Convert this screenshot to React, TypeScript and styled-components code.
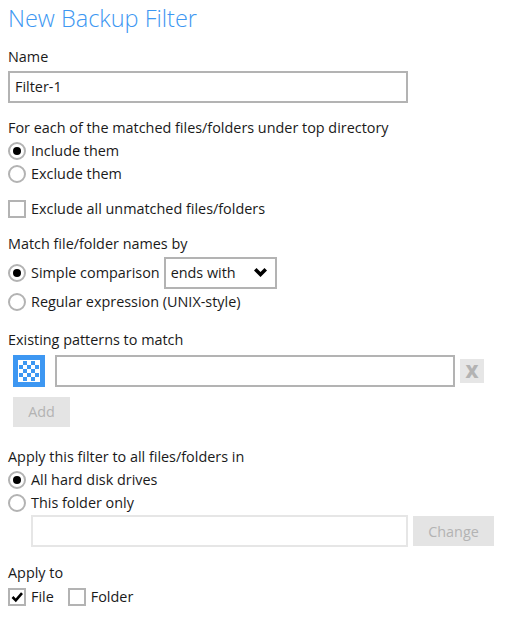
import React from "react";
import styled, { createGlobalStyle } from "styled-components";

const Global = createGlobalStyle`
  html, body { margin: 0; padding: 0; background: #fff; }
  body { font-family: "Open Sans", "Liberation Sans", sans-serif; font-size: 14.4px; color: #1a1a1a; }
`;

const Page = styled.div`
  width: 517px;
  height: 639px;
  box-sizing: border-box;
  padding: 0 8px;
  overflow: hidden;
`;

const Title = styled.h1`
  margin: 0;
  height: 36px;
  line-height: 36px;
  font-size: 23.5px;
  font-weight: 300;
  color: #3d97f2;
`;

const Section = styled.section<{ $top: number }>`
  margin-top: ${(p) => p.$top}px;
  display: flex;
  flex-direction: column;
`;

const Label = styled.div`
  height: 23px;
  line-height: 23px;
  white-space: nowrap;
`;

const Row = styled.label<{ $h?: number }>`
  display: flex;
  align-items: center;
  height: ${(p) => p.$h ?? 23}px;
  line-height: 23px;
  white-space: nowrap;
`;

const RadioMark = styled.span<{ $on?: boolean }>`
  width: 18px;
  height: 18px;
  box-sizing: border-box;
  border: 2px solid #b3b3b3;
  border-radius: 50%;
  margin-right: 5px;
  flex: none;
  display: flex;
  align-items: center;
  justify-content: center;
  &::after {
    content: "";
    display: ${(p) => (p.$on ? "block" : "none")};
    width: 8px;
    height: 8px;
    border-radius: 50%;
    background: #000;
  }
`;

const CheckMark = styled.span`
  width: 18px;
  height: 18px;
  box-sizing: border-box;
  border: 2px solid #b3b3b3;
  margin-right: 5px;
  flex: none;
  display: flex;
  align-items: center;
  justify-content: center;
`;

const TextBox = styled.div<{ $w: number; $faded?: boolean; $gap?: number }>`
  width: ${(p) => p.$w}px;
  height: 32px;
  box-sizing: border-box;
  margin-top: ${(p) => p.$gap ?? 0}px;
  border: 2px solid ${(p) => (p.$faded ? "#e6e6e6" : "#b3b3b3")};
  padding: 0 5px;
  line-height: 28px;
  flex: none;
`;

const Select = styled.div`
  width: 113px;
  height: 32px;
  box-sizing: border-box;
  border: 2px solid #b3b3b3;
  margin-left: 4px;
  padding: 0 8px 0 5px;
  display: flex;
  align-items: center;
  justify-content: space-between;
`;

const PatternRow = styled.div`
  display: flex;
  align-items: center;
  height: 32px;
  margin-top: 4px;
  padding-left: 5px;
`;

const PatternIcon = styled.svg`
  width: 32px;
  height: 32px;
  flex: none;
  margin-right: 10px;
`;

const RemoveButton = styled.div`
  width: 24px;
  height: 24px;
  margin-left: 5px;
  background: #e6e6e6;
  color: #b3b3b3;
  font-size: 18px;
  font-weight: 800;
  line-height: 24px;
  text-align: center;
`;

const DisabledButton = styled.div<{ $w: number; $line?: number }>`
  width: ${(p) => p.$w}px;
  height: 30px;
  line-height: ${(p) => p.$line ?? 30}px;
  text-align: center;
  background: #e4e4e4;
  color: #b3b3b3;
  flex: none;
`;

const AddWrap = styled.div`
  margin: 10px 0 0 5px;
`;

const PathRow = styled.div`
  display: flex;
  align-items: center;
  gap: 5px;
  padding-left: 23px;
  margin-top: 1px;
`;

const CheckGroup = styled.div`
  display: flex;
  align-items: center;
  gap: 14px;
  margin-top: 1px;
`;

const cells: [number, number][] = [];
for (let r = 0; r < 5; r++) for (let c = 0; c < 5; c++) if ((r + c) % 2 === 1) cells.push([c, r]);

const Pattern = () => (
  <PatternIcon viewBox="0 0 32 32" shapeRendering="crispEdges">
    <rect width="32" height="32" fill="#3d97f2" />
    <rect x="5" y="5" width="22" height="22" fill="#fff" />
    {cells.map(([c, r]) => (
      <rect key={`${c}-${r}`} x={6 + c * 4} y={6 + r * 4} width="4" height="4" fill="#3d97f2" />
    ))}
  </PatternIcon>
);

const Radio = ({ on, children, h }: { on?: boolean; children: React.ReactNode; h?: number }) => (
  <Row $h={h}>
    <RadioMark $on={on} />
    {children}
  </Row>
);

const Check = ({ on, children }: { on?: boolean; children: React.ReactNode }) => (
  <Row>
    <CheckMark>
      {on && (
        <svg width="14" height="14" viewBox="0 0 14 14">
          <path d="M2.5 7 L5.8 10.3 L12 3.2" fill="none" stroke="#000" strokeWidth="2.6" />
        </svg>
      )}
    </CheckMark>
    {children}
  </Row>
);

export default function App() {
  return (
    <Page>
      <Global />
      <Title>New Backup Filter</Title>

      <Section $top={9}>
        <Label>Name</Label>
        <TextBox $w={400} $gap={3}>Filter-1</TextBox>
      </Section>

      <Section $top={13}>
        <Label>For each of the matched files/folders under top directory</Label>
        <Radio on>Include them</Radio>
        <Radio>Exclude them</Radio>
      </Section>

      <Section $top={12}>
        <Check>Exclude all unmatched files/folders</Check>
      </Section>

      <Section $top={12}>
        <Label>Match file/folder names by</Label>
        <Radio on h={35}>
          Simple comparison
          <Select>
            ends with
            <svg width="13" height="9" viewBox="0 0 13 9">
              <path d="M0 2.5 L2.5 0 L6.5 4 L10.5 0 L13 2.5 L6.5 9 Z" fill="#000" />
            </svg>
          </Select>
        </Radio>
        <Radio>Regular expression (UNIX-style)</Radio>
      </Section>

      <Section $top={15}>
        <Label>Existing patterns to match</Label>
        <PatternRow>
          <Pattern />
          <TextBox $w={400} />
          <RemoveButton>X</RemoveButton>
        </PatternRow>
        <AddWrap>
          <DisabledButton $w={57}>Add</DisabledButton>
        </AddWrap>
      </Section>

      <Section $top={18}>
        <Label>Apply this filter to all files/folders in</Label>
        <Radio on>All hard disk drives</Radio>
        <Radio>This folder only</Radio>
        <PathRow>
          <TextBox $w={377} $faded />
          <DisabledButton $w={81} $line={31}>Change</DisabledButton>
        </PathRow>
      </Section>

      <Section $top={14}>
        <Label>Apply to</Label>
        <CheckGroup>
          <Check on>File</Check>
          <Check>Folder</Check>
        </CheckGroup>
      </Section>
    </Page>
  );
}
